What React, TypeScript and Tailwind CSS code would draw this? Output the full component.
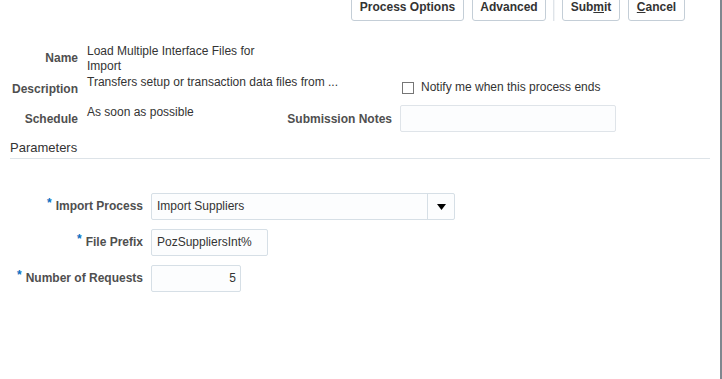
import { ReactNode } from 'react'

const font = { fontFamily: '"Liberation Sans", Arial, sans-serif' }

function ToolButton({ children, w }: { children: ReactNode; w: string }) {
  return (
    <button
      className={`flex h-[28px] items-center justify-center rounded-[3px] border border-[#c4ced7] bg-white text-[12px] font-bold text-[#333] ${w}`}
    >
      {children}
    </button>
  )
}

function InfoRow({
  label,
  value,
  right,
  wrap = true,
  h,
}: {
  label: string
  value: ReactNode
  right?: ReactNode
  wrap?: boolean
  h: string
}) {
  return (
    <div className={`flex items-start ${h}`}>
      <div className="w-[78px] shrink-0 pt-[7px] text-right text-[12px] font-bold leading-[15px] text-[#4f4f4f]">
        {label}
      </div>
      <div
        className={`ml-[9px] w-[200px] shrink-0 text-[12px] leading-[15px] text-[#333] ${wrap ? '' : 'whitespace-nowrap'}`}
      >
        {value}
      </div>
      {right}
    </div>
  )
}

function ParamRow({ label, children }: { label: string; children: ReactNode }) {
  return (
    <div className="flex h-[27px] items-center">
      <div className="w-[143px] shrink-0 text-right text-[12px] font-bold leading-[15px] text-[#4f4f4f]">
        <span className="relative top-[-3px] mr-[4px] text-[#0a6fc2]">*</span>
        {label}
      </div>
      <div className="ml-[8px]">{children}</div>
    </div>
  )
}

export default function App() {
  return (
    <div style={font} className="h-[379px] w-[722px] overflow-hidden border-r-2 border-[#7f878f] bg-white">
      {/* toolbar */}
      <div className="mt-[-7px] flex items-start justify-end pr-[35px]">
        <ToolButton w="w-[113px]">Process Options</ToolButton>
        <div className="w-[8px]" />
        <ToolButton w="w-[74px]">Advanced</ToolButton>
        <div className="mx-[7px] flex h-[28px]">
          <div className="w-px bg-[#dfe4e9]" />
          <div className="w-px bg-[#f2f4f6]" />
        </div>
        <ToolButton w="w-[58px]">
          <span>
            Sub<span className="underline">m</span>it
          </span>
        </ToolButton>
        <div className="w-[8px]" />
        <ToolButton w="w-[57px]">
          <span>
            <span className="underline">C</span>ancel
          </span>
        </ToolButton>
      </div>

      {/* header info */}
      <div className="mt-[23px]">
        <InfoRow h="h-[31px]" label="Name" value="Load Multiple Interface Files for Import" />
        <InfoRow
          h="h-[30px]"
          label="Description"
          wrap={false}
          value="Transfers setup or transaction data files from ..."
          right={
            <div className="ml-[115px] flex items-center pt-[5px]">
              <div className="h-[12px] w-[12px] border border-[#767676] bg-white" />
              <span className="ml-[7px] text-[12px] leading-[15px] text-[#333]">
                Notify me when this process ends
              </span>
            </div>
          }
        />
        <InfoRow
          h="h-[27px]"
          label="Schedule"
          value="As soon as possible"
          right={
            <div className="flex items-start">
              <div className="w-[105px] shrink-0 pt-[7px] text-right text-[12px] font-bold leading-[15px] text-[#4f4f4f]">
                Submission Notes
              </div>
              <div className="ml-[8px] h-[27px] w-[216px] rounded-[2px] border border-[#dfe4e9] bg-[#fcfdfe]" />
            </div>
          }
        />
      </div>

      {/* parameters */}
      <div className="mx-[10px] mt-[8px] border-b border-[#dde3e8] pb-[2px]">
        <div className="text-[13px] leading-[16px] text-[#333]">Parameters</div>
      </div>

      <div className="mt-[34px] flex flex-col gap-[9px]">
        <ParamRow label="Import Process">
          <div className="flex h-[27px] w-[304px] rounded-[2px] border border-[#d6dfe6] bg-[#fcfdfe]">
            <div className="flex-1 pl-[5px] text-[12px] leading-[25px] text-[#333]">Import Suppliers</div>
            <div className="flex w-[27px] items-center justify-center border-l border-[#d6dfe6]">
              <svg width="9" height="6" viewBox="0 0 9 6">
                <path d="M0 0H9L4.5 6Z" fill="#000" />
              </svg>
            </div>
          </div>
        </ParamRow>
        <ParamRow label="File Prefix">
          <div className="h-[27px] w-[117px] rounded-[2px] border border-[#d6dfe6] bg-[#fcfdfe] pl-[5px] text-[12px] leading-[25px] text-[#333]">
            PozSuppliersInt%
          </div>
        </ParamRow>
        <ParamRow label="Number of Requests">
          <div className="h-[27px] w-[90px] rounded-[2px] border border-[#d6dfe6] bg-[#fcfdfe] pr-[4px] text-right text-[12px] leading-[25px] text-[#333]">
            5
          </div>
        </ParamRow>
      </div>
    </div>
  )
}
